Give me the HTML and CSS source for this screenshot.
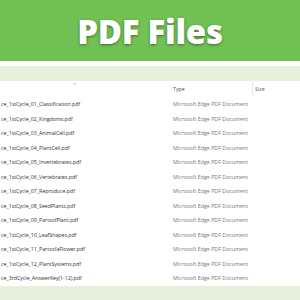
FILE: index.html
```html
<!DOCTYPE html>
<html lang="en">
<head>
  <meta charset="UTF-8">
  <title>PDF Files</title>
  <link rel="stylesheet" href="styles.css">
</head>
<body>
  <div class="banner">
    <h1>PDF Files</h1>
  </div>
  <div class="toolbar"></div>

  <div class="list-header">
    <div class="col-name"><span class="sort-arrow">^</span></div>
    <div class="col-type">Type</div>
    <div class="col-size">Size</div>
  </div>

  <div class="file-list">
    <div class="file-row"><div class="col-name">ce_1stCycle_01_Classification.pdf</div><div class="col-type">Microsoft Edge PDF Document</div><div class="col-size"></div></div>
    <div class="file-row"><div class="col-name">ce_1stCycle_02_Kingdoms.pdf</div><div class="col-type">Microsoft Edge PDF Document</div><div class="col-size"></div></div>
    <div class="file-row"><div class="col-name">ce_1stCycle_03_AnimalCell.pdf</div><div class="col-type">Microsoft Edge PDF Document</div><div class="col-size"></div></div>
    <div class="file-row"><div class="col-name">ce_1stCycle_04_PlantCell.pdf</div><div class="col-type">Microsoft Edge PDF Document</div><div class="col-size"></div></div>
    <div class="file-row"><div class="col-name">ce_1stCycle_05_Invertebrates.pdf</div><div class="col-type">Microsoft Edge PDF Document</div><div class="col-size"></div></div>
    <div class="file-row"><div class="col-name">ce_1stCycle_06_Vertebrates.pdf</div><div class="col-type">Microsoft Edge PDF Document</div><div class="col-size"></div></div>
    <div class="file-row"><div class="col-name">ce_1stCycle_07_Reproduce.pdf</div><div class="col-type">Microsoft Edge PDF Document</div><div class="col-size"></div></div>
    <div class="file-row"><div class="col-name">ce_1stCycle_08_SeedPlants.pdf</div><div class="col-type">Microsoft Edge PDF Document</div><div class="col-size"></div></div>
    <div class="file-row"><div class="col-name">ce_1stCycle_09_PartsofPlant.pdf</div><div class="col-type">Microsoft Edge PDF Document</div><div class="col-size"></div></div>
    <div class="file-row"><div class="col-name">ce_1stCycle_10_LeafShapes.pdf</div><div class="col-type">Microsoft Edge PDF Document</div><div class="col-size"></div></div>
    <div class="file-row"><div class="col-name">ce_1stCycle_11_PartsofaFlower.pdf</div><div class="col-type">Microsoft Edge PDF Document</div><div class="col-size"></div></div>
    <div class="file-row"><div class="col-name">ce_1stCycle_12_PlantSystems.pdf</div><div class="col-type">Microsoft Edge PDF Document</div><div class="col-size"></div></div>
    <div class="file-row"><div class="col-name">ce_3rdCycle_AnswerKey(1-12).pdf</div><div class="col-type">Microsoft Edge PDF Document</div><div class="col-size"></div></div>
  </div>

  <div class="footer-strip"></div>
</body>
</html>
```

FILE: styles.css
```css
* {
  margin: 0;
  padding: 0;
  box-sizing: border-box;
}

body {
  width: 300px;
  height: 300px;
  overflow: hidden;
  background: #fff;
  font-family: "Open Sans", Arial, sans-serif;
}

.banner {
  height: 61px;
  background: #71c154;
  display: flex;
  align-items: center;
  justify-content: center;
}

.banner h1 {
  color: #fff;
  font-family: "Open Sans", sans-serif;
  font-weight: 800;
  font-size: 33px;
  line-height: 1;
  letter-spacing: -0.3px;
  text-shadow: 0 1px 3px rgba(0, 0, 0, 0.45);
  margin-top: 2px;
}

.toolbar {
  height: 15px;
  margin-top: 5px;
  background: #e6f1dd;
}

.list-header,
.file-row {
  display: grid;
  grid-template-columns: 172px 80px 1fr;
  font-size: 5.3px;
  white-space: nowrap;
}

.list-header {
  height: 15px;
  align-items: center;
  color: #555;
}

.list-header .col-name {
  position: relative;
  height: 100%;
}

.sort-arrow {
  position: absolute;
  left: 73px;
  top: -1px;
  color: #999;
  font-size: 6px;
}

.list-header .col-size {
  border-left: 1px solid #e8e8e8;
  padding-left: 2px;
  height: 100%;
  display: flex;
  align-items: center;
}

.list-header .col-type {
  padding-left: 1px;
}

.file-list {
  padding-top: 1px;
}

.file-row {
  height: 14.5px;
  align-items: center;
}

.file-row .col-name {
  color: #333;
  padding-left: 1px;
  letter-spacing: -0.05px;
  overflow: hidden;
}

.file-row .col-type {
  color: #777;
  padding-left: 1px;
}

.footer-strip {
  height: 15px;
  background: #e6f1dd;
}
```
